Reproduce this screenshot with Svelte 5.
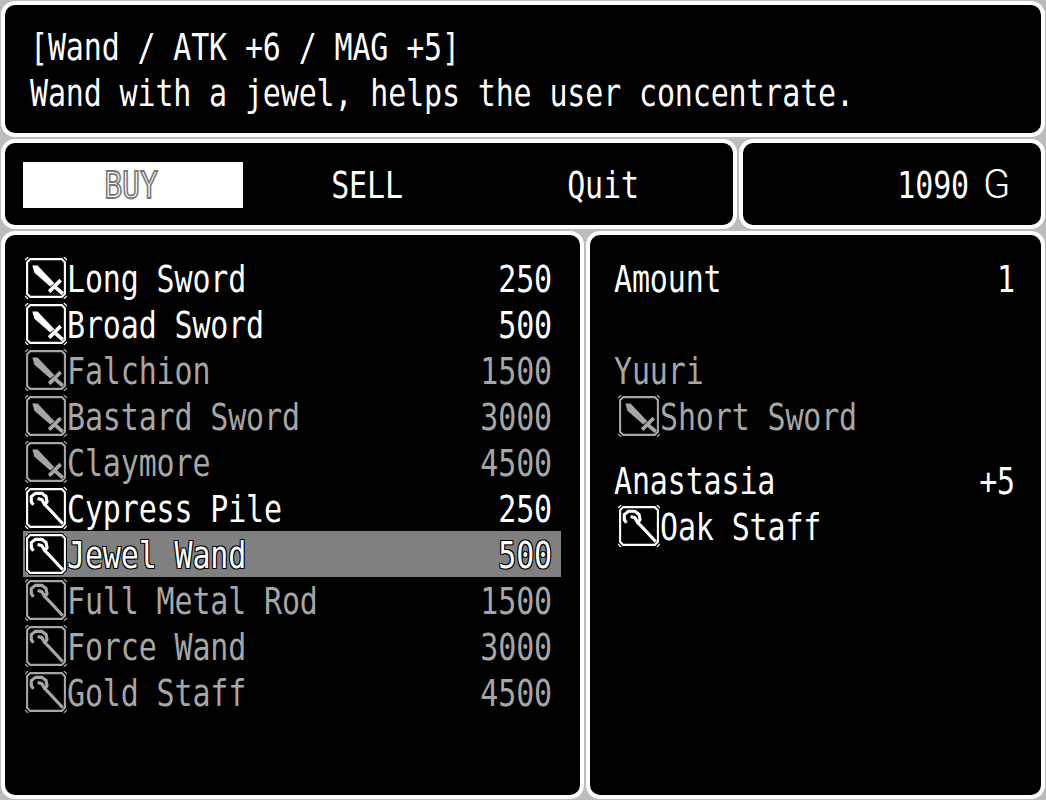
<script>
  const items = [
    { icon: 's', name: 'Long Sword', price: 250, on: true },
    { icon: 's', name: 'Broad Sword', price: 500, on: true },
    { icon: 's', name: 'Falchion', price: 1500 },
    { icon: 's', name: 'Bastard Sword', price: 3000 },
    { icon: 's', name: 'Claymore', price: 4500 },
    { icon: 'w', name: 'Cypress Pile', price: 250, on: true },
    { icon: 'w', name: 'Jewel Wand', price: 500, on: true, sel: true },
    { icon: 'w', name: 'Full Metal Rod', price: 1500 },
    { icon: 'w', name: 'Force Wand', price: 3000 },
    { icon: 'w', name: 'Gold Staff', price: 4500 }
  ];
</script>

{#snippet icon(kind)}
  <svg class="icon" viewBox="0 0 40 40" aria-hidden="true">
    <path class="frame" d="M5 2 H35 L38 5 V35 L35 38 H5 L2 35 V5 Z" />
    <path class="tick" d="M0 3 L3 0 M37 0 L40 3 M0 37 L3 40 M37 40 L40 37" />
    {#if kind === 's'}
      <path class="blade" d="M7 8 L12 8 L28 25 L24 28 L9 15 Z" />
      <path class="guard" d="M23 33 L34 22 M28 28 L36 35" />
    {:else}
      <path class="staff" d="M8 17 L6 14 L6 9 L10 6 L16 6 L20 9 L21 14 L19 17 L24 22 L36 35" />
      <path class="staff" d="M12 11 L16 12 L19 17" />
    {/if}
  </svg>
{/snippet}

<main class="screen">
  <section class="panel help">
    <p class="t">[Wand / ATK +6 / MAG +5]</p>
    <p class="t">Wand with a jewel, helps the user concentrate.</p>
  </section>

  <section class="panel command">
    <div class="cmd active"><span class="t buy">BUY</span></div>
    <div class="cmd"><span class="t">SELL</span></div>
    <div class="cmd"><span class="t">Quit</span></div>
  </section>

  <section class="panel gold">
    <span class="t amount">1090</span><span class="wide">G</span>
  </section>

  <section class="panel list">
    {#each items as it}
      <div class="row" class:off={!it.on} class:sel={it.sel}>
        {@render icon(it.icon)}
        <span class="t name">{it.name}</span>
        <span class="t price">{it.price}</span>
      </div>
    {/each}
  </section>

  <section class="panel status">
    <div class="row plain">
      <span class="t name">Amount</span>
      <span class="t price">1</span>
    </div>
    <div class="spacer"></div>
    <div class="row plain off"><span class="t name">Yuuri</span></div>
    <div class="row equip off">
      {@render icon('s')}
      <span class="t name">Short Sword</span>
    </div>
    <div class="row plain actor">
      <span class="t name">Anastasia</span>
      <span class="t price">+5</span>
    </div>
    <div class="row equip">
      {@render icon('w')}
      <span class="t name">Oak Staff</span>
    </div>
  </section>
</main>

<style>
  :global(body) {
    margin: 0;
    background: #000;
  }

  .screen {
    width: 1046px;
    height: 800px;
    box-sizing: border-box;
    padding: 1px;
    background: #bcbcbc;
    display: grid;
    grid-template-columns: 583px 151px 1fr;
    grid-template-rows: 136px 90px 1fr;
    gap: 2px;
    font-family: "DejaVu Sans Mono", "Liberation Mono", monospace;
    font-size: 30px;
    letter-spacing: -0.15px;
    color: #fff;
    overflow: hidden;
  }

  .panel {
    box-sizing: border-box;
    background: #000;
    border: 4px solid #fff;
    border-radius: 14px;
    min-width: 0;
  }

  .t {
    display: inline-block;
    margin: 0;
    line-height: 46px;
    height: 46px;
    white-space: pre;
    transform: translateY(1px) scaleY(1.22);
    transform-origin: 50% 50%;
  }

  .help {
    grid-column: 1 / 4;
    padding: 19px 25px 0 25px;
  }

  .help .t {
    display: block;
  }

  .command {
    grid-column: 1 / 3;
    padding: 19px 18px 0;
    display: grid;
    grid-template-columns: repeat(3, 220px);
    column-gap: 16px;
    align-items: start;
  }

  .cmd {
    height: 46px;
    box-sizing: border-box;
    padding-right: 4px;
    text-align: center;
  }

  .active {
    background: #fff;
  }

  .buy {
    color: #fff;
    -webkit-text-stroke: 1.5px #777;
  }

  .gold {
    padding: 19px 31px 0 0;
    display: flex;
    justify-content: flex-end;
    align-items: flex-start;
  }

  .amount {
    margin-right: 14px;
  }

  .wide {
    width: 27px;
    font-family: Roboto, "Liberation Sans", sans-serif;
    font-weight: 300;
    font-size: 40px;
    line-height: 46px;
  }

  .list {
    padding: 20px 19px 0 18px;
  }

  .status {
    grid-column: 2 / 4;
    padding: 20px 26px 0 24px;
  }

  .row {
    display: flex;
    align-items: center;
    height: 46px;
  }

  .row .t {
    transform: translateY(2px) scaleY(1.22);
  }

  .off {
    color: #a6a6a6;
  }

  .sel {
    background: #808080;
  }

  .sel .t {
    text-shadow: 1px 1px 0 #000, -1px -1px 0 #000, 1px -1px 0 #000, -1px 1px 0 #000;
  }

  .icon {
    width: 42px;
    height: 42px;
    flex: none;
    margin-left: 2px;
    color: inherit;
  }

  .sel .icon {
    background: #000;
    border-radius: 5px;
  }

  .frame {
    fill: none;
    stroke: currentColor;
    stroke-width: 2;
  }

  .tick {
    fill: none;
    stroke: currentColor;
    stroke-width: 1.2;
  }

  .blade {
    fill: currentColor;
  }

  .guard {
    fill: none;
    stroke: currentColor;
    stroke-width: 3.5;
  }

  .staff {
    fill: none;
    stroke: currentColor;
    stroke-width: 3;
  }

  .name {
    flex: 1;
  }

  .price {
    margin-right: 9px;
  }

  .plain .price {
    margin-right: 0;
  }

  .spacer {
    height: 46px;
  }

  .equip {
    padding-left: 2px;
  }

  .actor {
    margin-top: 18px;
  }
</style>
